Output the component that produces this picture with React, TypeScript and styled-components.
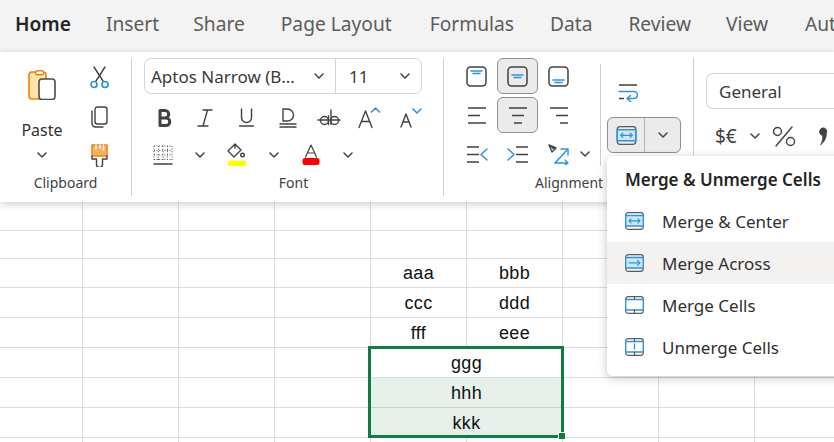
import React from "react";
import styled, { createGlobalStyle } from "styled-components";

const GlobalStyle = createGlobalStyle`
  html, body {
    margin: 0;
    padding: 0;
    background: #fff;
    overflow: hidden;
  }
  * { box-sizing: border-box; }
`;

const uiFont = `"Noto Sans", "Open Sans", "Liberation Sans", sans-serif`;
const dark = "#424242";
const blue = "#2f93dc";

const Page = styled.div`
  position: relative;
  width: 834px;
  height: 442px;
  overflow: hidden;
  font-family: ${uiFont};
  color: #242424;
`;

const TabBar = styled.div`
  height: 52px;
  display: flex;
  align-items: center;
  padding: 0 0 5px 15px;
  background: #f3f3f3;
  white-space: nowrap;
  overflow: hidden;
`;

const Tab = styled.span<{ $active?: boolean; $gap?: number }>`
  margin-left: ${(p) => p.$gap ?? 0}px;
  font-size: 19.2px;
  font-weight: ${(p) => (p.$active ? 600 : 400)};
  color: ${(p) => (p.$active ? "#242424" : "#5c5c5c")};
`;

const Ribbon = styled.div`
  position: relative;
  z-index: 2;
  height: 150px;
  display: flex;
  background: #fff;
  box-shadow: 0 2px 8px rgba(0, 0, 0, 0.2);
`;

const Group = styled.div<{ $width: number; $pad?: number }>`
  flex: none;
  width: ${(p) => p.$width}px;
  padding-left: ${(p) => p.$pad ?? 0}px;
  display: flex;
  flex-direction: column;
`;

const GroupBody = styled.div`
  flex: 1;
  min-height: 0;
`;

const GroupLabel = styled.div<{ $indent?: number }>`
  height: 24px;
  margin-bottom: 7px;
  padding-left: ${(p) => p.$indent ?? 0}px;
  text-align: ${(p) => (p.$indent ? "left" : "center")};
  font-size: 14px;
  line-height: 24px;
  color: #424242;
  white-space: nowrap;
`;

const Divider = styled.div<{ $top: number; $height: number }>`
  flex: none;
  width: 1px;
  margin-top: ${(p) => p.$top}px;
  height: ${(p) => p.$height}px;
  background: #cfcfcf;
`;

/* clipboard */
const ClipBody = styled(GroupBody)`
  display: flex;
`;

const PasteColumn = styled.div`
  width: 84px;
  display: flex;
  flex-direction: column;
  align-items: center;
  padding-top: 18px;
`;

const PasteText = styled.div`
  margin-top: 19px;
  font-size: 16px;
  line-height: 22px;
  color: #333;
`;

const PasteChevron = styled.div`
  margin-top: 11px;
`;

const ClipTools = styled.div`
  width: 30px;
  padding-top: 6px;
  display: grid;
  grid-auto-rows: 39px;
  justify-items: center;
  align-items: center;
`;

/* font */
const Combo = styled.div<{ $width: number }>`
  width: ${(p) => p.$width}px;
  height: 36px;
  margin-top: 6px;
  display: flex;
  align-items: center;
  border: 1px solid #d4d4d4;
  border-radius: 7px;
  background: #fff;
  font-size: 17px;
  color: #3a3a3a;
  white-space: nowrap;
  overflow: hidden;
`;

const ComboPart = styled.div<{ $width: number; $split?: boolean; $left: number }>`
  flex: none;
  width: ${(p) => p.$width}px;
  height: 100%;
  padding: 0 11px 0 ${(p) => p.$left}px;
  display: flex;
  align-items: center;
  justify-content: space-between;
  border-right: ${(p) => (p.$split ? "1px solid #d4d4d4" : "none")};
`;

const ToolRow = styled.div<{ $first?: boolean }>`
  display: flex;
  height: 37px;
  align-items: center;
  margin-top: ${(p) => (p.$first ? 5 : 0)}px;
`;

const ToolCell = styled.div<{ $width: number }>`
  flex: none;
  width: ${(p) => p.$width}px;
  height: 100%;
  display: flex;
  align-items: center;
  justify-content: center;
`;

/* alignment */
const AlignGrid = styled.div`
  margin-top: 6px;
  display: grid;
  grid-template-columns: 41px 41px 41px 12px;
  grid-auto-rows: 36px;
  row-gap: 3px;
`;

const AlignButton = styled.div<{ $active?: boolean }>`
  display: flex;
  align-items: center;
  justify-content: center;
  border-radius: 6px;
  border: 1px solid ${(p) => (p.$active ? "#8f8f8f" : "transparent")};
  background: ${(p) => (p.$active ? "#ebebeb" : "transparent")};
`;

/* wrap and merge */
const WrapSlot = styled.div`
  width: 42px;
  height: 65px;
  display: flex;
  align-items: flex-end;
  justify-content: center;
  padding-bottom: 15px;
`;

const SplitButton = styled.div`
  width: 74px;
  height: 36px;
  display: flex;
  border: 1px solid #8f8f8f;
  border-radius: 6px;
  background: #ebebeb;
`;

const SplitPart = styled.div<{ $width: number; $split?: boolean }>`
  width: ${(p) => p.$width}px;
  display: flex;
  align-items: center;
  justify-content: center;
  border-right: ${(p) => (p.$split ? "1px solid #b5b5b5" : "none")};
`;

/* number */
const GeneralCombo = styled(Combo)`
  margin-top: 21px;
  padding-left: 12px;
  border-right: none;
  border-radius: 7px 0 0 7px;
`;

const NumberRow = styled.div`
  display: flex;
  align-items: center;
  height: 36px;
  margin-top: 9px;
  padding-left: 9px;
  color: #3f3f3f;
`;

const Currency = styled.span`
  flex: none;
  font-size: 19px;
  width: 33px;
`;

/* sheet */
const Sheet = styled.div`
  display: grid;
  grid-template-columns: 83px repeat(8, 96px);
  grid-template-rows: 29px 28px 29px repeat(6, 30px);
  font-family: "Liberation Sans", Arial, sans-serif;
  font-size: 18px;
  letter-spacing: 0.3px;
  color: #111;
`;

const Cell = styled.div<{ $span?: number; $selected?: boolean }>`
  grid-column: span ${(p) => p.$span ?? 1};
  display: flex;
  align-items: center;
  justify-content: center;
  padding-top: 1px;
  border-right: 1px solid #dcdcdc;
  border-bottom: 1px solid ${(p) => (p.$selected ? "#c9d3cd" : "#dcdcdc")};
  background: ${(p) => (p.$selected ? "#e6efe9" : "#fff")};
`;

const Selection = styled.div`
  position: absolute;
  left: 368px;
  top: 346px;
  width: 196px;
  height: 92px;
  border: 3px solid #107c41;
  pointer-events: none;
`;

const Handle = styled.div`
  position: absolute;
  right: -4px;
  bottom: -4px;
  width: 7px;
  height: 7px;
  background: #107c41;
  border: 1px solid #fff;
  border-width: 1px 0 0 1px;
`;

/* dropdown */
const Menu = styled.div`
  position: absolute;
  z-index: 3;
  left: 607px;
  top: 156px;
  width: 240px;
  height: 220px;
  padding-top: 2px;
  background: #fff;
  border-radius: 6px;
  box-shadow: 0 2px 10px rgba(0, 0, 0, 0.24);
`;

const MenuTitle = styled.div`
  height: 42px;
  padding-left: 18px;
  display: flex;
  align-items: center;
  font-size: 17px;
  font-weight: 600;
  color: #242424;
  white-space: nowrap;
`;

const MenuItem = styled.div<{ $hover?: boolean }>`
  height: 42px;
  padding-left: 18px;
  display: flex;
  align-items: center;
  gap: 18px;
  font-size: 17px;
  color: #303030;
  background: ${(p) => (p.$hover ? "#f3f2f1" : "transparent")};
  white-space: nowrap;
`;

const Svg = styled.svg`
  display: block;
  flex: none;
  fill: none;
  stroke: ${dark};
  stroke-width: 1.4;
  stroke-linecap: round;
  stroke-linejoin: round;
`;

const Icon = ({ w, h, children }: { w: number; h: number; children: React.ReactNode }) => (
  <Svg width={w} height={h} viewBox={`0 0 ${w} ${h}`}>
    {children}
  </Svg>
);

const Chevron = () => (
  <Icon w={10} h={6}>
    <path d="M1 1l4 4 4-4" strokeWidth={1.5} />
  </Icon>
);

const PasteIcon = () => (
  <Icon w={28} h={30}>
    <rect x="1" y="2" width="17" height="27" rx="3" fill="#fde3a7" stroke="#e8820c" strokeWidth={1.6} />
    <rect x="7.5" y="0.8" width="8" height="4" rx="2" fill="#fff" stroke="#e8820c" />
    <rect x="11" y="9" width="16" height="20.5" rx="3" fill="#fff" stroke="#4a4a4a" strokeWidth={1.6} />
  </Icon>
);

const CutIcon = () => (
  <Icon w={19} h={23}>
    <path d="M4 1l9 14M15 1L6 15" />
    <circle cx="4" cy="18.5" r="3" stroke={blue} strokeWidth={1.7} />
    <circle cx="15" cy="18.5" r="3" stroke={blue} strokeWidth={1.7} />
  </Icon>
);

const CopyIcon = () => (
  <Icon w={17} h={22}>
    <rect x="4" y="1" width="12" height="17" rx="2.5" />
    <path d="M1 5v12.5a3.5 3.5 0 0 0 3.5 3.5H12" />
  </Icon>
);

const PainterIcon = () => (
  <Icon w={17} h={23}>
    <rect x="1" y="1" width="15" height="11" fill="#f5b25c" stroke="#e8820c" strokeWidth={1.5} />
    <path d="M5 1v4M9 1v3M12.5 1v5" stroke="#fff" />
    <path d="M1 12v3h4.5v5.5a2.8 2.8 0 0 0 6 0V15H16v-3" />
  </Icon>
);

const BoldIcon = () => (
  <Icon w={14} h={18}>
    <path d="M2 1.5h5a3.7 3.7 0 0 1 0 7.4H2zM2 8.9h6a3.8 3.8 0 0 1 0 7.6H2z" strokeWidth={3} />
  </Icon>
);

const ItalicIcon = () => (
  <Icon w={17} h={18}>
    <path d="M6 1h9M10.5 1L6 17M1 17h10" />
  </Icon>
);

const UnderlineIcon = () => (
  <Icon w={15} h={19}>
    <path d="M2.5 1v8.5a5 5 0 0 0 10 0V1M0.5 18h14" />
  </Icon>
);

const DoubleUnderlineIcon = () => (
  <Icon w={18} h={20}>
    <path d="M4 1h4.5a6 6 0 0 1 0 12H4zM1 16h16M1 19h16" />
  </Icon>
);

const StrikeIcon = () => (
  <Icon w={24} h={20}>
    <path d="M1 12h22" />
    <circle cx="7.5" cy="12.5" r="4" />
    <path d="M11.5 8v8.5M14 2v14.5" />
    <circle cx="17.5" cy="12.5" r="4" />
  </Icon>
);

const GrowIcon = () => (
  <Icon w={23} h={23}>
    <path d="M1 21.5L7.5 5 14 21.5M3.5 15.5h8" />
    <path d="M13.5 6l4-4 4 4" stroke={blue} strokeWidth={1.6} />
  </Icon>
);

const ShrinkIcon = () => (
  <Icon w={22} h={21}>
    <path d="M1 20L6 7l5 13M3 15h6" />
    <path d="M13 2l4 4 4-4" stroke={blue} strokeWidth={1.6} />
  </Icon>
);

const BorderIcon = () => (
  <Icon w={20} h={20}>
    <path
      d="M1 1h18M1 5.5h18M1 10h18M1 14.5h18M1 1v14M5.5 1v14M10 1v14M14.5 1v14M19 1v14"
      strokeDasharray="1 1.6"
      strokeLinecap="butt"
      strokeWidth={1}
      stroke="#4f4f4f"
    />
    <path d="M1 19h18" strokeWidth={1.5} />
  </Icon>
);

const FillIcon = () => (
  <Icon w={19} h={23}>
    <path d="M8 1L1 8l6 6 7-7zM8 1v4" />
    <circle cx="15.5" cy="12" r="1.8" />
    <rect x="1" y="17.5" width="18" height="5.5" rx="1.5" fill="#ffff00" stroke="none" />
  </Icon>
);

const FontColorIcon = () => (
  <Icon w={18} h={21}>
    <path d="M3.5 13L9 1l5.5 12M5.5 9h7" strokeWidth={1.2} />
    <rect x="0.5" y="14" width="17" height="7" rx="2.5" fill="#ff0000" stroke="none" />
  </Icon>
);

const AlignBoxIcon = ({ pos }: { pos: "top" | "mid" | "bot" }) => {
  const y = pos === "top" ? 5 : pos === "mid" ? 9 : 14;
  return (
    <Icon w={21} h={21}>
      <rect x="1" y="1" width="19" height="19" rx="3.5" strokeWidth={1.5} />
      <path d={`M5 ${y}h11M7 ${y + 2.6}h7`} stroke={blue} strokeWidth={1.5} />
    </Icon>
  );
};

const LinesIcon = ({ pos }: { pos: "left" | "center" | "right" }) => {
  const d =
    pos === "left"
      ? "M1 1h18M1 8.5h12M1 16h18"
      : pos === "center"
      ? "M1 1h18M4 8.5h12M6 16h8"
      : "M1 1h18M7 8.5h12M11 16h8";
  return (
    <Icon w={20} h={17}>
      <path d={d} strokeLinecap="butt" />
    </Icon>
  );
};

const OutdentIcon = () => (
  <Icon w={22} h={17}>
    <path d="M1 1h12M1 8.5h12M1 16h12" strokeLinecap="butt" />
    <path d="M21 3l-6 5.5 6 5.5" stroke={blue} strokeWidth={1.5} />
  </Icon>
);

const IndentIcon = () => (
  <Icon w={22} h={17}>
    <path d="M9 1h12M9 8.5h12M9 16h12" strokeLinecap="butt" />
    <path d="M1 3l6 5.5-6 5.5" stroke={blue} strokeWidth={1.5} />
  </Icon>
);

const OrientationIcon = () => (
  <Icon w={22} h={22}>
    <path d="M1 2l7 3-4 4zM3.2 3.5l3 3" />
    <path d="M7 20L19 7" stroke={blue} strokeWidth={1.5} />
    <path d="M13 6h7v6M7 20h13M17 17l3 3-3 2" stroke={blue} strokeWidth={1.4} />
  </Icon>
);

const WrapIcon = () => (
  <Icon w={20} h={18}>
    <path d="M1 1h18M1 14.5h5" strokeLinecap="butt" />
    <path d="M1 7.5h15a3.3 3.3 0 0 1 0 7h-6M12.5 11.5L9 14.5l3.5 3" stroke={blue} strokeWidth={1.5} />
  </Icon>
);

type MergeKind = "center" | "across" | "cells" | "unmerge";

const MergeIcon = ({ kind, large }: { kind: MergeKind; large?: boolean }) => {
  const filled = kind === "center" || kind === "across";
  return (
    <Svg width={large ? 21 : 19} height={large ? 19 : 18} viewBox="0 0 19 18">
      <rect x="0.7" y="0.7" width="17.6" height="16.6" rx="2.5" stroke="#5c5c5c" strokeWidth={1.2} />
      <rect
        x="0.7"
        y="3.5"
        width="17.6"
        height="10.5"
        fill={filled ? "#cfe6f8" : "#fff"}
        stroke={blue}
        strokeWidth={1.4}
      />
      {kind === "center" && <path d="M4 8.8h11M6 6.8l-2 2 2 2M13 6.8l2 2-2 2" stroke={blue} strokeWidth={1.2} />}
      {kind === "across" && <path d="M4 8.8h11M12.5 6.3l2.5 2.5-2.5 2.5" stroke={blue} strokeWidth={1.2} />}
      {(kind === "cells" || kind === "unmerge") && <path d="M9.5 1v2.5M9.5 14v3" stroke="#5c5c5c" strokeWidth={1.2} />}
      {kind === "unmerge" && <path d="M9.5 6v5" stroke={blue} strokeWidth={1.3} />}
    </Svg>
  );
};

const PercentIcon = () => (
  <Icon w={24} h={21}>
    <circle cx="5.5" cy="5.5" r="4" />
    <circle cx="18.5" cy="15.5" r="4" />
    <path d="M20 1L4 20" />
  </Icon>
);

const CommaIcon = () => (
  <Icon w={10} h={20}>
    <path d="M1.5 5.5a3.7 3.7 0 1 1 7 1.7C8.5 11.5 6.5 16 2.5 19c1.8-3.5 2.4-6 2-9.5C2.5 9 1.5 7.5 1.5 5.5z" fill={dark} stroke={dark} strokeWidth={0.6} />
  </Icon>
);

const tabs: { label: string; gap: number }[] = [
  { label: "Insert", gap: 35 },
  { label: "Share", gap: 34 },
  { label: "Page Layout", gap: 36 },
  { label: "Formulas", gap: 38 },
  { label: "Data", gap: 36 },
  { label: "Review", gap: 36 },
  { label: "View", gap: 35 },
  { label: "Automate", gap: 37 },
];

const menuItems: { label: string; kind: MergeKind; hover?: boolean }[] = [
  { label: "Merge & Center", kind: "center" },
  { label: "Merge Across", kind: "across", hover: true },
  { label: "Merge Cells", kind: "cells" },
  { label: "Unmerge Cells", kind: "unmerge" },
];

const COLS = 9;
const sheetRows: { col: number; text: string; span?: number; selected?: boolean }[][] = [
  [],
  [],
  [{ col: 4, text: "aaa" }, { col: 5, text: "bbb" }],
  [{ col: 4, text: "ccc" }, { col: 5, text: "ddd" }],
  [{ col: 4, text: "fff" }, { col: 5, text: "eee" }],
  [{ col: 4, text: "ggg", span: 2 }],
  [{ col: 4, text: "hhh", span: 2, selected: true }],
  [{ col: 4, text: "kkk", span: 2, selected: true }],
  [],
];

function renderRow(row: (typeof sheetRows)[number], r: number) {
  const cells: React.ReactNode[] = [];
  let c = 0;
  while (c < COLS) {
    const hit = row.find((x) => x.col === c);
    if (hit) {
      cells.push(
        <Cell key={`${r}-${c}`} $span={hit.span} $selected={hit.selected}>
          {hit.text}
        </Cell>
      );
      c += hit.span ?? 1;
    } else {
      cells.push(<Cell key={`${r}-${c}`} />);
      c += 1;
    }
  }
  return cells;
}

export default function App() {
  return (
    <Page>
      <GlobalStyle />
      <TabBar>
        <Tab $active>Home</Tab>
        {tabs.map((t) => (
          <Tab key={t.label} $gap={t.gap}>
            {t.label}
          </Tab>
        ))}
      </TabBar>

      <Ribbon>
        <Group $width={131}>
          <ClipBody>
            <PasteColumn>
              <PasteIcon />
              <PasteText>Paste</PasteText>
              <PasteChevron>
                <Chevron />
              </PasteChevron>
            </PasteColumn>
            <ClipTools>
              <CutIcon />
              <CopyIcon />
              <PainterIcon />
            </ClipTools>
          </ClipBody>
          <GroupLabel>Clipboard</GroupLabel>
        </Group>
        <Divider $top={6} $height={138} />

        <Group $width={311} $pad={12}>
          <GroupBody>
            <Combo $width={278}>
              <ComboPart $width={191} $left={6} $split>
                Aptos Narrow (B...
                <Chevron />
              </ComboPart>
              <ComboPart $width={85} $left={13}>
                11
                <Chevron />
              </ComboPart>
            </Combo>
            <ToolRow $first>
              <ToolCell $width={41}><BoldIcon /></ToolCell>
              <ToolCell $width={41}><ItalicIcon /></ToolCell>
              <ToolCell $width={41}><UnderlineIcon /></ToolCell>
              <ToolCell $width={41}><DoubleUnderlineIcon /></ToolCell>
              <ToolCell $width={41}><StrikeIcon /></ToolCell>
              <ToolCell $width={41}><GrowIcon /></ToolCell>
              <ToolCell $width={41}><ShrinkIcon /></ToolCell>
            </ToolRow>
            <ToolRow>
              <ToolCell $width={38}><BorderIcon /></ToolCell>
              <ToolCell $width={35}><Chevron /></ToolCell>
              <ToolCell $width={38}><FillIcon /></ToolCell>
              <ToolCell $width={37}><Chevron /></ToolCell>
              <ToolCell $width={37}><FontColorIcon /></ToolCell>
              <ToolCell $width={37}><Chevron /></ToolCell>
            </ToolRow>
          </GroupBody>
          <GroupLabel>Font</GroupLabel>
        </Group>
        <Divider $top={6} $height={138} />

        <Group $width={156} $pad={12}>
          <GroupBody>
            <AlignGrid>
              <AlignButton><AlignBoxIcon pos="top" /></AlignButton>
              <AlignButton $active><AlignBoxIcon pos="mid" /></AlignButton>
              <AlignButton><AlignBoxIcon pos="bot" /></AlignButton>
              <span />
              <AlignButton><LinesIcon pos="left" /></AlignButton>
              <AlignButton $active><LinesIcon pos="center" /></AlignButton>
              <AlignButton><LinesIcon pos="right" /></AlignButton>
              <span />
              <AlignButton><OutdentIcon /></AlignButton>
              <AlignButton><IndentIcon /></AlignButton>
              <AlignButton><OrientationIcon /></AlignButton>
              <AlignButton><Chevron /></AlignButton>
            </AlignGrid>
          </GroupBody>
          <GroupLabel $indent={79}>Alignment</GroupLabel>
        </Group>
        <Divider $top={12} $height={102} />

        <Group $width={92} $pad={6}>
          <WrapSlot>
            <WrapIcon />
          </WrapSlot>
          <SplitButton>
            <SplitPart $width={37} $split>
              <MergeIcon kind="center" large />
            </SplitPart>
            <SplitPart $width={35}>
              <Chevron />
            </SplitPart>
          </SplitButton>
        </Group>
        <Divider $top={6} $height={100} />

        <Group $width={160} $pad={12}>
          <GeneralCombo $width={148}>General</GeneralCombo>
          <NumberRow>
            <Currency>$€</Currency>
            <ToolCell $width={14}><Chevron /></ToolCell>
            <ToolCell $width={44}><PercentIcon /></ToolCell>
            <ToolCell $width={34}><CommaIcon /></ToolCell>
          </NumberRow>
        </Group>
      </Ribbon>

      <Sheet>{sheetRows.map(renderRow)}</Sheet>
      <Selection>
        <Handle />
      </Selection>

      <Menu>
        <MenuTitle>Merge &amp; Unmerge Cells</MenuTitle>
        {menuItems.map((m) => (
          <MenuItem key={m.label} $hover={m.hover}>
            <MergeIcon kind={m.kind} />
            {m.label}
          </MenuItem>
        ))}
      </Menu>
    </Page>
  );
}
